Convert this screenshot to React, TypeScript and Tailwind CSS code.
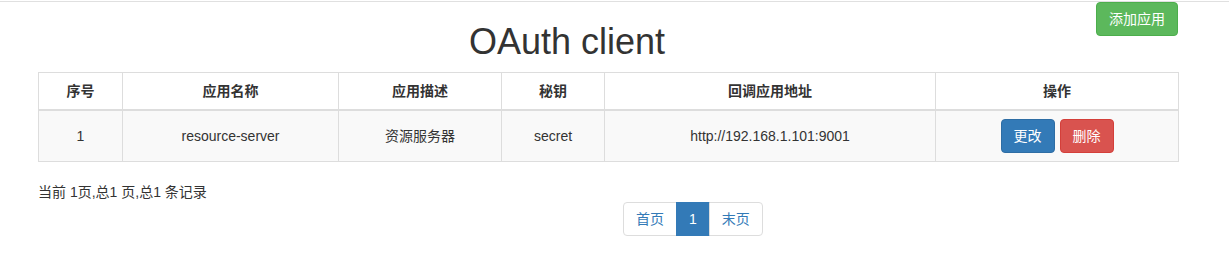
const font = "font-['Liberation_Sans','Noto_Sans_CJK_SC',sans-serif]";

const columns = [
  { title: "序号", width: 84 },
  { title: "应用名称", width: 216 },
  { title: "应用描述", width: 163 },
  { title: "秘钥", width: 103 },
  { title: "回调应用地址", width: 331 },
  { title: "操作", width: 243 },
];

const rows = [
  { id: 1, name: "resource-server", desc: "资源服务器", secret: "secret", url: "http://192.168.1.101:9001" },
];

const App = () => {
  return (
    <div className={`min-h-[270px] bg-white text-[14px] leading-[20px] text-[#333] ${font}`}>
      {/* top rule */}
      <div className="mt-px h-px bg-[#e0e0e0]" />

      <div className="ml-[38px] w-[1140px]">
        {/* title + add button share one grid cell */}
        <div className="grid">
          <h1 className="col-start-1 row-start-1 mt-[20px] mb-[10px] pl-[431px] text-[36px] leading-[39.6px] font-medium text-[#333]">
            OAuth client
          </h1>
          <button className="col-start-1 row-start-1 self-start justify-self-end h-[34px] px-[12px] rounded-[4px] border border-[#4cae4c] bg-[#5cb85c] text-white text-[14px] leading-[20px]">
            添加应用
          </button>
        </div>

        {/* client table */}
        <table className="w-[1140px] table-fixed border-collapse border border-[#ddd]">
          <colgroup>
            {columns.map((c) => (
              <col key={c.title} style={{ width: c.width }} />
            ))}
          </colgroup>
          <thead>
            <tr>
              {columns.map((c) => (
                <th
                  key={c.title}
                  className="border border-b-2 border-[#ddd] p-[8px] text-center align-bottom font-bold leading-[20px]"
                >
                  {c.title}
                </th>
              ))}
            </tr>
          </thead>
          <tbody>
            {rows.map((r) => (
              <tr key={r.id} className="bg-[#f9f9f9]">
                <td className="border border-[#ddd] p-[8px] text-center align-middle">{r.id}</td>
                <td className="border border-[#ddd] p-[8px] text-center align-middle">{r.name}</td>
                <td className="border border-[#ddd] p-[8px] text-center align-middle">{r.desc}</td>
                <td className="border border-[#ddd] p-[8px] text-center align-middle">{r.secret}</td>
                <td className="border border-[#ddd] p-[8px] text-center align-middle">{r.url}</td>
                <td className="border border-[#ddd] p-[8px] text-center align-middle">
                  <div className="flex justify-center gap-[5px]">
                    <button className="h-[34px] px-[12px] rounded-[4px] border border-[#2e6da4] bg-[#337ab7] text-white leading-[20px]">
                      更改
                    </button>
                    <button className="h-[34px] px-[12px] rounded-[4px] border border-[#d43f3a] bg-[#d9534f] text-white leading-[20px]">
                      删除
                    </button>
                  </div>
                </td>
              </tr>
            ))}
          </tbody>
        </table>

        {/* paging info */}
        <p className="mt-[20px]">当前 1页,总1 页,总1 条记录</p>
        <div className="ml-[585px] flex">
          <a className="h-[34px] px-[12px] py-[6px] border border-[#ddd] rounded-l-[4px] text-[#337ab7] leading-[20px]">首页</a>
          <a className="-ml-px h-[34px] px-[12px] py-[6px] border border-[#337ab7] bg-[#337ab7] text-white leading-[20px]">1</a>
          <a className="-ml-px h-[34px] px-[12px] py-[6px] border border-[#ddd] rounded-r-[4px] text-[#337ab7] leading-[20px]">末页</a>
        </div>
      </div>
    </div>
  );
};

export default App;
